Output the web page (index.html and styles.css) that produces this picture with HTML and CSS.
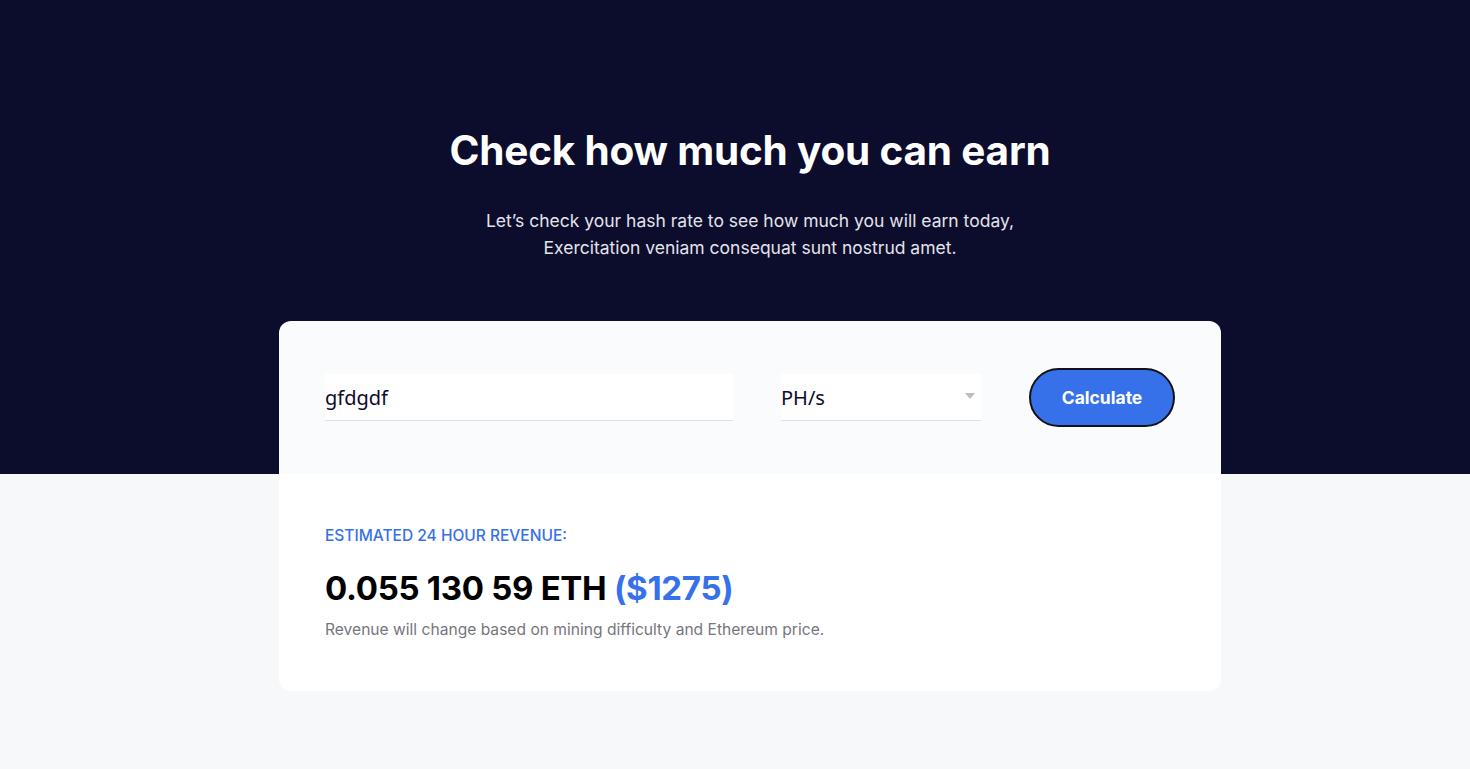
FILE: index.html
```html
<!DOCTYPE html>
<html lang="en">
<head>
<meta charset="utf-8">
<title>Check how much you can earn</title>
<link rel="stylesheet" href="styles.css">
</head>
<body>
<section class="hero">
  <h1 class="title">Check how much you can earn</h1>
  <p class="subtitle">Let’s check your hash rate to see how much you will earn today,<br>Exercitation veniam consequat sunt nostrud amet.</p>
  <div class="card-top">
    <div class="field hash">gfdgdf</div>
    <div class="field unit">
      <span>PH/s</span>
      <svg class="caret" width="10" height="6" viewBox="0 0 10 6"><path d="M0 0H10L5 6Z" fill="#bdbdbd"/></svg>
    </div>
    <button class="btn">Calculate</button>
  </div>
</section>
<section class="results">
  <div class="card-bottom">
    <div class="label">ESTIMATED 24 HOUR REVENUE:</div>
    <div class="amount">0.055 130 59 ETH <span class="usd">($1275)</span></div>
    <div class="note">Revenue will change based on mining difficulty and Ethereum price.</div>
  </div>
</section>
</body>
</html>
```

FILE: styles.css
```css
* { box-sizing: border-box; }
html, body { margin: 0; padding: 0; }
body {
  font-family: "Inter", "Noto Sans", sans-serif;
  background: #f7f8fa;
  height: 769px;
}
.hero {
  background: #0c0c2c;
  padding: 127px 0 0 30px;
  display: flex;
  flex-direction: column;
  align-items: center;
}
.title {
  margin: 0;
  color: #ffffff;
  font-size: 40.5px;
  line-height: 48px;
  font-weight: 700;
  letter-spacing: -0.2px;
}
.subtitle {
  margin: 32px 0 0;
  color: #e3e3ea;
  font-size: 17.5px;
  line-height: 27px;
  text-align: center;
}
.card-top {
  margin-top: 60px;
  width: 942px;
  background: #fafbfd;
  border-radius: 12px 12px 0 0;
  padding: 47px 46px 47px;
  display: flex;
  align-items: center;
  gap: 48px;
}
.field {
  height: 47px;
  background: #ffffff;
  border-bottom: 1px solid #dddde2;
  display: flex;
  align-items: center;
  font-family: "Noto Sans", sans-serif;
  font-size: 20px;
  color: #0c0c2c;
}
.hash { width: 408px; }
.unit {
  width: 200px;
  justify-content: space-between;
  padding-right: 6px;
}
.caret { margin-top: -2px; }
.btn {
  width: 146px;
  height: 59px;
  border-radius: 30px;
  border: 2px solid #111118;
  background: #3671e9;
  color: #ffffff;
  font-family: "Inter", sans-serif;
  font-weight: 700;
  font-size: 17.5px;
  padding: 0;
}
.results {
  display: flex;
  justify-content: center;
  padding-left: 30px;
}
.card-bottom {
  width: 942px;
  background: #ffffff;
  border-radius: 0 0 12px 12px;
  padding: 52px 46px 51px;
}
.label {
  color: #3671e9;
  font-size: 15.5px;
  line-height: 20px;
  font-weight: 500;
}
.amount {
  margin-top: 22px;
  font-size: 33px;
  line-height: 40px;
  font-weight: 700;
  color: #000000;
  letter-spacing: -0.3px;
}
.usd { color: #3671e9; }
.note {
  margin-top: 12px;
  font-size: 15.6px;
  line-height: 20px;
  color: #76767e;
}
```
